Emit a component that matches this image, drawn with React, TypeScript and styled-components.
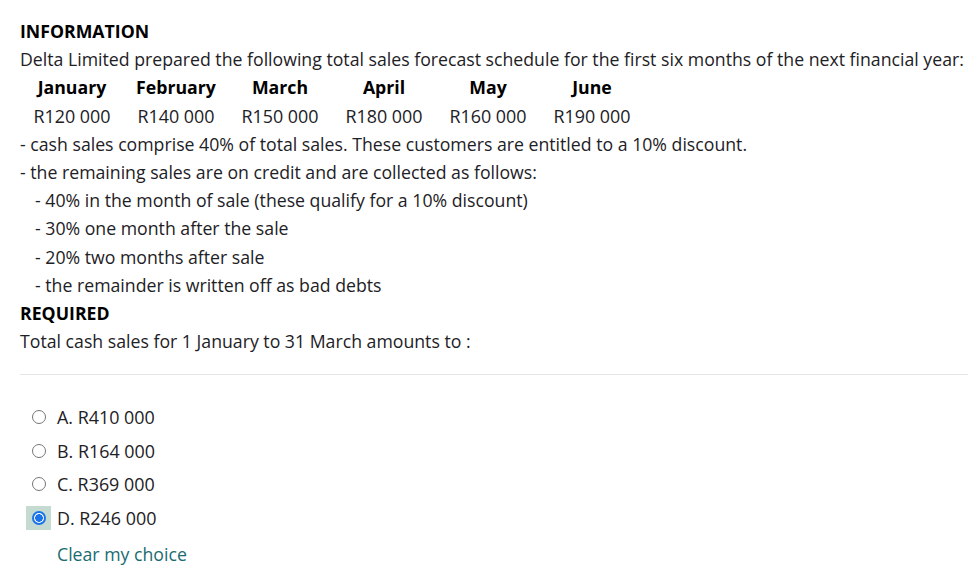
import React from 'react';
import styled, { createGlobalStyle } from 'styled-components';

const GlobalStyle = createGlobalStyle`
  html, body {
    margin: 0;
    padding: 0;
    background: #fff;
  }
  body {
    font-family: "Open Sans", "Noto Sans", sans-serif;
    color: #1d2125;
  }
`;

const Page = styled.div`
  padding: 17px 0 0 20px;
  font-size: 17.7px;
  line-height: 28.2px;
  width: 948px;
  overflow: hidden;
`;

const Heading = styled.div`
  font-weight: 700;
  color: #000;
`;

const Line = styled.div<{ $indent?: boolean }>`
  padding-left: ${p => (p.$indent ? '15px' : '0')};
  white-space: nowrap;
`;

const Schedule = styled.div`
  display: grid;
  grid-template-columns: repeat(6, 104px);
  text-align: center;
`;

const Month = styled.div`
  font-weight: 700;
  color: #000;
`;

const Amount = styled.div`
  font-size: 17.9px;
`;

const Rule = styled.hr`
  border: 0;
  border-top: 1px solid #e6e6e6;
  margin: 19px 0 0;
`;

const Answers = styled.div`
  display: flex;
  flex-direction: column;
  padding: 30px 0 0 6px;
  gap: 9.5px;
`;

const Option = styled.label`
  display: flex;
  align-items: center;
  gap: 6px;
  font-size: 17.9px;
  line-height: 24px;
`;

const RadioBox = styled.span<{ $focus?: boolean }>`
  width: 25px;
  height: 24px;
  display: flex;
  align-items: center;
  justify-content: center;
  background: ${p => (p.$focus ? '#c5dbd2' : 'transparent')};
`;

const Radio = styled.span<{ $checked?: boolean }>`
  box-sizing: border-box;
  width: 14px;
  height: 14px;
  border-radius: 50%;
  border: ${p => (p.$checked ? '2px solid #1a73e8' : '1px solid #767676')};
  background: ${p => (p.$checked ? 'radial-gradient(circle, #1a73e8 0 3.6px, #fff 4px)' : '#fff')};
`;

const ClearLink = styled.a`
  color: #1a6b70;
  font-size: 17.7px;
  padding-left: 31px;
  margin-top: 1px;
  text-decoration: none;
`;

const months = ['January', 'February', 'March', 'April', 'May', 'June'];
const amounts = ['R120 000', 'R140 000', 'R150 000', 'R180 000', 'R160 000', 'R190 000'];
const options = ['A. R410 000', 'B. R164 000', 'C. R369 000', 'D. R246 000'];

const App = () => {
  return (
    <>
      <GlobalStyle />
      <Page>
        <Heading>INFORMATION</Heading>
        <Line>Delta Limited prepared the following total sales forecast schedule for the first six months of the next financial year:</Line>
        <Schedule>
          {months.map(m => <Month key={m}>{m}</Month>)}
          {amounts.map(a => <Amount key={a}>{a}</Amount>)}
        </Schedule>
        <Line>- cash sales comprise 40% of total sales. These customers are entitled to a 10% discount.</Line>
        <Line>- the remaining sales are on credit and are collected as follows:</Line>
        <Line $indent>- 40% in the month of sale (these qualify for a 10% discount)</Line>
        <Line $indent>- 30% one month after the sale</Line>
        <Line $indent>- 20% two months after sale</Line>
        <Line $indent>- the remainder is written off as bad debts</Line>
        <Heading>REQUIRED</Heading>
        <Line>Total cash sales for 1 January to 31 March amounts to :</Line>
        <Rule />
        <Answers>
          {options.map((o, i) => (
            <Option key={o}>
              <RadioBox $focus={i === 3}>
                <Radio $checked={i === 3} />
              </RadioBox>
              {o}
            </Option>
          ))}
          <ClearLink href="#">Clear my choice</ClearLink>
        </Answers>
      </Page>
    </>
  );
};

export default App;
